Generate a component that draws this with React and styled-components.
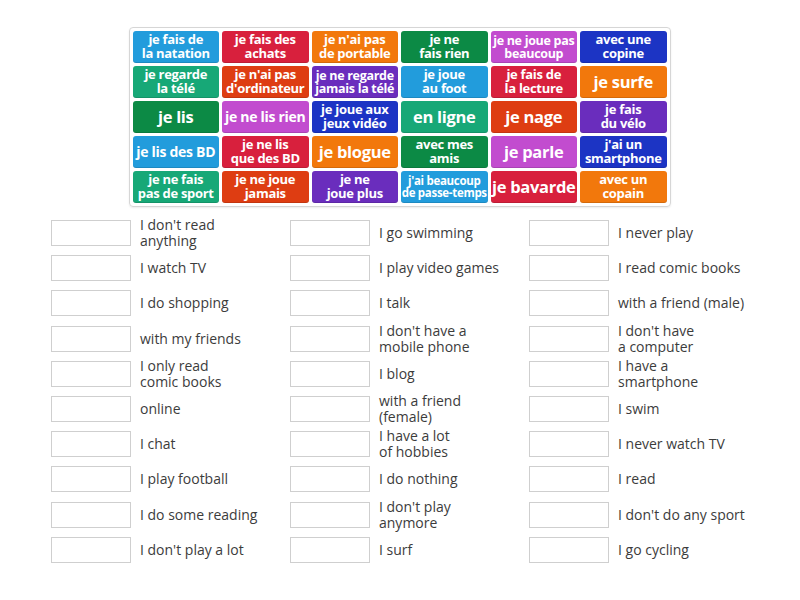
import React from "react";
import styled, { createGlobalStyle } from "styled-components";

const COLORS = [
  "#229cdc", // light blue
  "#d8203d", // crimson
  "#f2780c", // orange
  "#0c8a45", // dark green
  "#c24ccf", // orchid
  "#1c34c4", // dark blue
  "#17a877", // teal
  "#de3d12", // orange red
  "#6a2dbd", // purple
];

// [text, font size]
const TILES = [
  ["je fais de\nla natation", 13],
  ["je fais des\nachats", 13],
  ["je n'ai pas\nde portable", 13],
  ["je ne\nfais rien", 13],
  ["je ne joue pas\nbeaucoup", 12.5],
  ["avec une\ncopine", 13],
  ["je regarde\nla télé", 13],
  ["je n'ai pas\nd'ordinateur", 13],
  ["je ne regarde\njamais la télé", 12.5],
  ["je joue\nau foot", 13],
  ["je fais de\nla lecture", 13],
  ["je surfe", 16.5],
  ["je lis", 16.5],
  ["je ne lis rien", 14],
  ["je joue aux\njeux vidéo", 13],
  ["en ligne", 16.5],
  ["je nage", 16.5],
  ["je fais\ndu vélo", 13],
  ["je lis des BD", 14],
  ["je ne lis\nque des BD", 13],
  ["je blogue", 16.5],
  ["avec mes\namis", 13],
  ["je parle", 16.5],
  ["j'ai un\nsmartphone", 13],
  ["je ne fais\npas de sport", 13],
  ["je ne joue\njamais", 13],
  ["je ne\njoue plus", 13],
  ["j'ai beaucoup\nde passe-temps", 11.5],
  ["je bavarde", 16.5],
  ["avec un\ncopain", 13],
];

const COLUMNS = [
  [
    "I don't read\nanything",
    "I watch TV",
    "I do shopping",
    "with my friends",
    "I only read\ncomic books",
    "online",
    "I chat",
    "I play football",
    "I do some reading",
    "I don't play a lot",
  ],
  [
    "I go swimming",
    "I play video games",
    "I talk",
    "I don't have a\nmobile phone",
    "I blog",
    "with a friend\n(female)",
    "I have a lot\nof hobbies",
    "I do nothing",
    "I don't play\nanymore",
    "I surf",
  ],
  [
    "I never play",
    "I read comic books",
    "with a friend (male)",
    "I don't have\na computer",
    "I have a\nsmartphone",
    "I swim",
    "I never watch TV",
    "I read",
    "I don't do any sport",
    "I go cycling",
  ],
];

const App = () => {
  return (
    <>
      <GlobalStyle />
      <Page>
        {/* the word tiles */}
        <TileBoard>
          {TILES.map(([text, size], i) => (
            <Tile key={i} $bg={COLORS[i % 9]} $size={size}>
              {text}
            </Tile>
          ))}
        </TileBoard>

        {/* the answer slots */}
        <Answers>
          {COLUMNS.map((col, c) => (
            <Column key={c}>
              {col.map((label) => (
                <Row key={label}>
                  <Slot />
                  <Label>{label}</Label>
                </Row>
              ))}
            </Column>
          ))}
        </Answers>
      </Page>
    </>
  );
};

export default App;

const GlobalStyle = createGlobalStyle`
  body {
    margin: 0;
    background: #fff;
    font-family: "Open Sans", "Noto Sans", sans-serif;
  }
`;

const Page = styled.div`
  width: 800px;
  height: 600px;
  padding-top: 27px;
  box-sizing: border-box;
  display: flex;
  flex-direction: column;
  align-items: center;
`;

const TileBoard = styled.div`
  display: grid;
  grid-template-columns: repeat(6, 86.5px);
  grid-auto-rows: 32px;
  gap: 3px;
  padding: 3px;
  border: 1px solid #d6d6d6;
  border-radius: 4px;
  box-shadow: 0 1px 2px rgba(0, 0, 0, 0.08);
  margin-left: -1px;
`;

const Tile = styled.div`
  display: flex;
  align-items: center;
  justify-content: center;
  text-align: center;
  white-space: pre-line;
  background: ${(p) => p.$bg};
  color: #fff;
  border-radius: 3px;
  font-weight: 700;
  font-size: ${(p) => p.$size}px;
  letter-spacing: -0.3px;
  line-height: 1.05;
  box-shadow: inset 0 -1px 0 rgba(0, 0, 0, 0.12);
`;

const Answers = styled.div`
  align-self: stretch;
  display: grid;
  grid-template-columns: repeat(3, 239px);
  padding-left: 51px;
  margin-top: 13px;
`;

const Column = styled.div`
  display: flex;
  flex-direction: column;
  gap: 9.2px;
`;

const Row = styled.div`
  display: flex;
  align-items: center;
  gap: 9px;
  height: 26px;
`;

const Slot = styled.div`
  width: 80px;
  height: 26px;
  box-sizing: border-box;
  border: 1px solid #cfcfcf;
  background: #fff;
  flex-shrink: 0;
`;

const Label = styled.div`
  font-size: 14px;
  line-height: 16px;
  color: #3c3c3c;
  white-space: pre-line;
`;
